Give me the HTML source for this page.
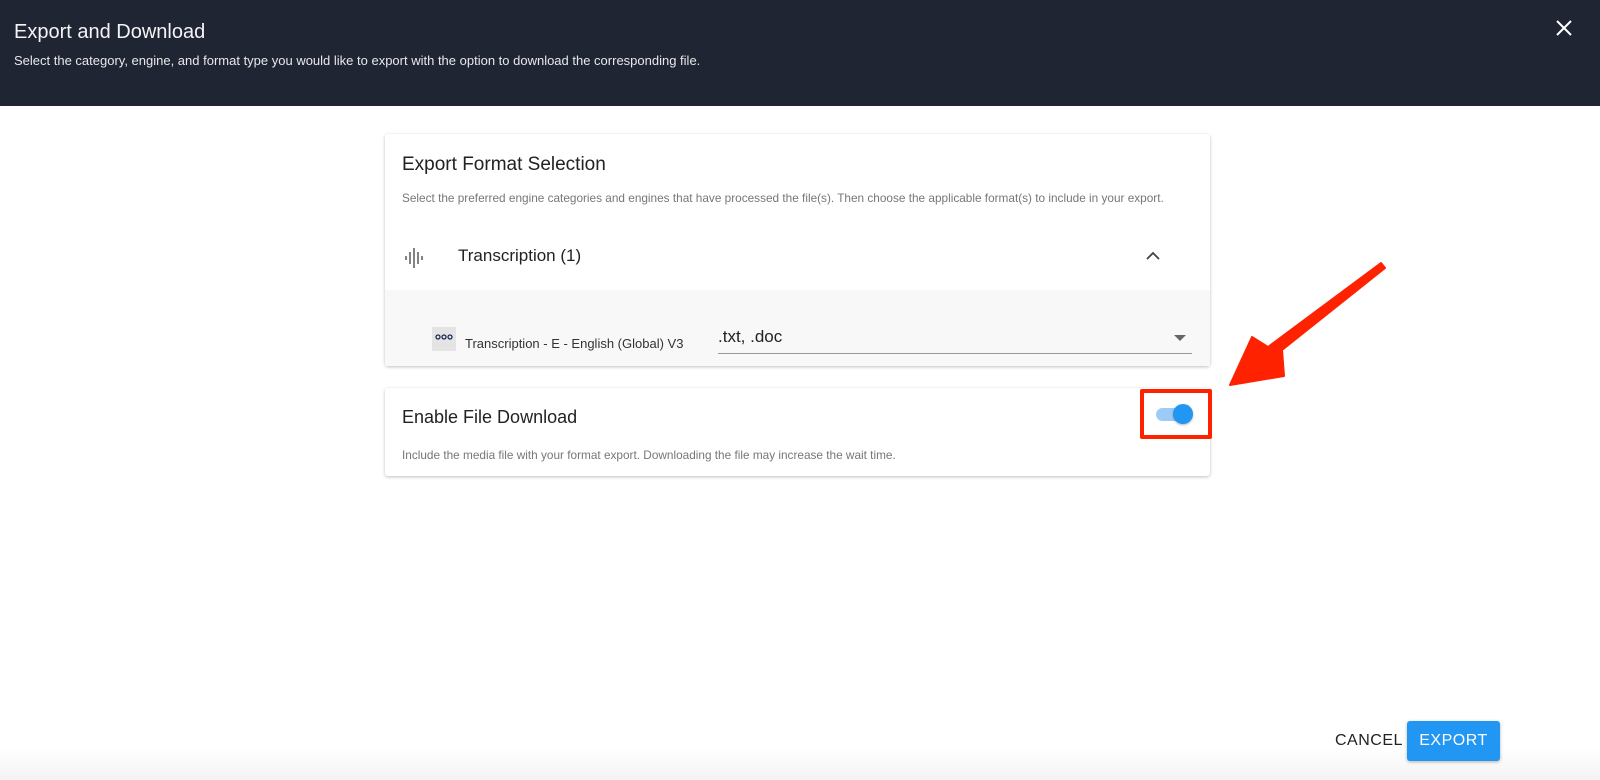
<!DOCTYPE html>
<html><head><style>
body{margin:0;width:1600px;height:780px;overflow:hidden;background:#fff;font-family:"Liberation Sans",sans-serif;position:relative}
.hdr{position:absolute;left:0;top:0;width:1600px;height:106px;background:#1f2532;color:#fff}
.abs{position:absolute;white-space:nowrap}
.card{position:absolute;left:385px;width:825px;background:#fff;box-shadow:0 1px 3px rgba(0,0,0,.25);border-radius:3px}
</style></head><body>
<div class="hdr">
<div class="abs" style="left:14px;top:21px;font-size:20px;color:#f4f4f4">Export and Download</div>
<div class="abs" style="left:14px;top:53px;font-size:13px;color:#e8e8e8">Select the category, engine, and format type you would like to export with the option to download the corresponding file.</div>
<svg class="abs" style="left:1555px;top:19px" width="18" height="18"><path d="M2 2L16 16M16 2L2 16" stroke="#fff" stroke-width="2"/></svg>
</div>
<div class="card" style="top:134px;height:232px">
<div style="position:absolute;left:0;top:156px;width:825px;height:76px;background:#f8f8f8"></div>
<div class="abs" style="left:17px;top:20px;font-size:19px;color:#222">Export Format Selection</div>
<div class="abs" style="left:17px;top:57px;font-size:11.8px;color:#777">Select the preferred engine categories and engines that have processed the file(s). Then choose the applicable format(s) to include in your export.</div>
<svg class="abs" style="left:19px;top:113px" width="22" height="22"><g stroke="#666" stroke-width="1.6"><path d="M2 9v4M6 5v12M10 1v20M14 5v12M18 9v4"/></g></svg>
<div class="abs" style="left:73px;top:112px;font-size:17px;color:#222">Transcription (1)</div>
<svg class="abs" style="left:761px;top:117px" width="14" height="10"><path d="M1 8L7 2L13 8" stroke="#444" stroke-width="1.8" fill="none"/></svg>
<div class="abs" style="left:47px;top:193px;width:24px;height:24px;background:#e4e4e4"></div>
<svg class="abs" style="left:47px;top:193px" width="24" height="24"><g fill="none" stroke="#1a2a55" stroke-width="1.3"><circle cx="6" cy="10" r="2"/><circle cx="12" cy="10" r="2"/><circle cx="18" cy="10" r="2"/></g></svg>
<div class="abs" style="left:80px;top:202px;font-size:13px;color:#333">Transcription - E - English (Global) V3</div>
<div class="abs" style="left:333px;top:193px;font-size:17px;color:#222">.txt, .doc</div>
<div class="abs" style="left:333px;top:219px;width:474px;height:1px;background:#999"></div>
<svg class="abs" style="left:789px;top:201px" width="12" height="7"><path d="M0 0H12L6 6Z" fill="#666"/></svg>
</div>
<div class="card" style="top:388px;height:88px">
<div class="abs" style="left:17px;top:19px;font-size:18px;color:#222">Enable File Download</div>
<div class="abs" style="left:17px;top:60px;font-size:11.8px;color:#777">Include the media file with your format export. Downloading the file may increase the wait time.</div>
</div>
<div class="abs" style="left:1140px;top:389px;width:64px;height:42px;border:4px solid #ff2200;border-radius:2px"></div>
<div class="abs" style="left:1156px;top:408px;width:28px;height:13px;border-radius:7px;background:#9ccbf8"></div>
<div class="abs" style="left:1173px;top:404px;width:20px;height:20px;border-radius:50%;background:#2196f3;box-shadow:0 1px 2px rgba(0,0,0,.3)"></div>
<svg class="abs" style="left:0;top:0" width="1600" height="780"><polygon points="1381,263 1385,268 1282,350 1284,376 1230,385 1252,337 1268,347" fill="#ff2200" stroke="#ff2200" stroke-width="2" stroke-linejoin="round"/></svg>
<div style="position:absolute;left:0;top:748px;width:1600px;height:32px;background:linear-gradient(#fff,#f3f3f3)"></div>
<div class="abs" style="left:1335px;top:732px;font-size:16px;color:#222;letter-spacing:.5px">CANCEL</div>
<div class="abs" style="left:1407px;top:721px;width:93px;height:40px;background:#2196f3;border-radius:3px;box-shadow:0 1px 3px rgba(0,0,0,.3);color:#fff;font-size:16px;text-align:center;line-height:40px;letter-spacing:.5px">EXPORT</div>
</body></html>
